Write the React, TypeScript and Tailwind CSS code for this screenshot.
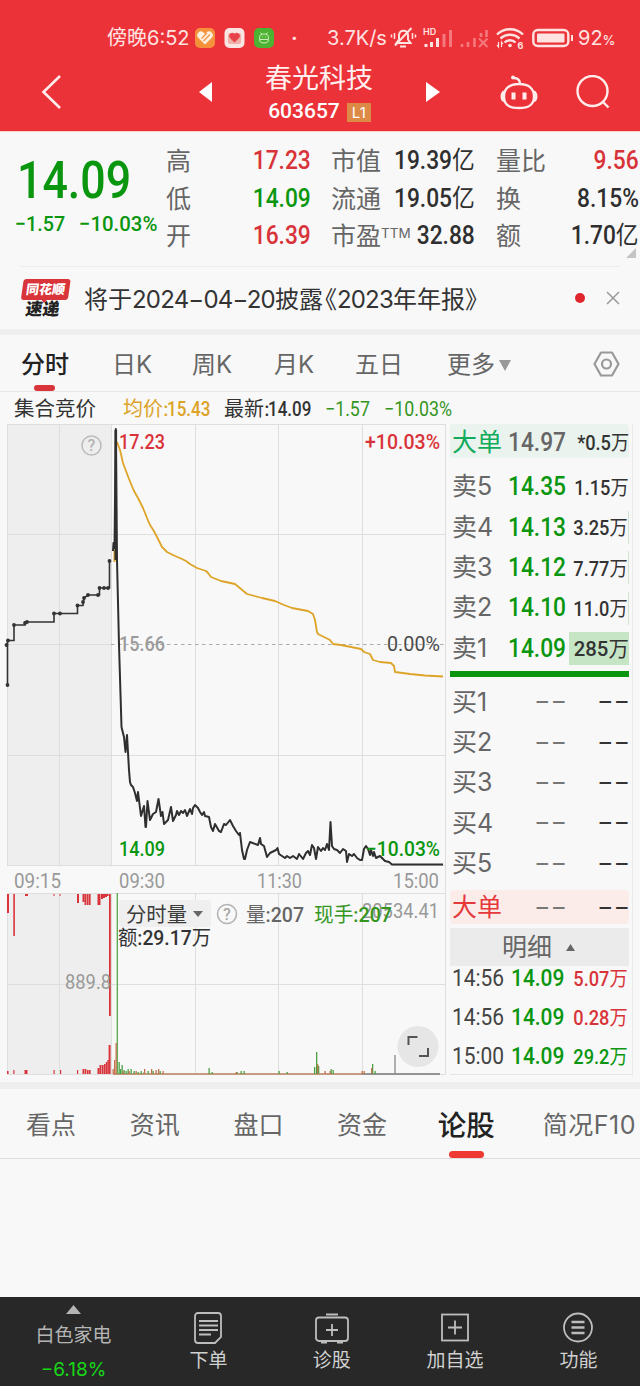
import { ReactNode, SVGProps } from "react";

interface Level {
  label: string;
  price: string;
  volume: string;
}

const sells: Level[] = [
  { label: "卖5", price: "14.35", volume: "1.15万" },
  { label: "卖4", price: "14.13", volume: "3.25万" },
  { label: "卖3", price: "14.12", volume: "7.77万" },
  { label: "卖2", price: "14.10", volume: "11.0万" },
  { label: "卖1", price: "14.09", volume: "285万" },
];

const buys = ["买1", "买2", "买3", "买4", "买5"];

const ticks = [
  { time: "14:56", price: "14.09", volume: "5.07万", up: true },
  { time: "14:56", price: "14.09", volume: "0.28万", up: true },
  { time: "15:00", price: "14.09", volume: "29.2万", up: false },
];

const avgLine =
  "117,442 120,450 123,463 129,479 134,491 138,498 143,508 147,518 150,525 152,528 155,533 162,547 167,552 171,554 175,556 182,559 186,561 190,564 197,568 206,571 208,573 211,577 221,581 235,584 241,589 247,594 262,598 275,601 284,605 292,608 308,611 313,614 315,620 317,632 318,634 322,636 330,640 333,644 341,645 361,649 364,652 370,654 373,660 380,662 391,663 394,666 395,672 410,674 425,675.5 443,676.5";

const auctionLine =
  "7.5,685 7.5,640.5 14,640.5 14,625 25,625 25,622 54,622 54,613.5 77.5,613.5 77.5,605.5 83,605.5 84,598 88,595 99.5,595 99.5,588 109.5,588 109.5,561";

const priceLine =
  "113,551 113.5,543 114.5,548 115.8,429 117,560 119,645 121.5,727 124,737 125.5,752 127,735 129,770 130,782 131,785 133,787 135,793 137,801 138,792 141,816 144,806 145.5,827 146,827 147.5,801 150,820 153,814 156,812 158.5,799 161,816 162.5,812 164,824 168,820 171,807 173,821 176,815 177,811 179,815 181,811 183,813 185,810 187,816 190,809 192,814 193,808 195,805 198,808 200,812 202,815 204,812 205,816 209,817 211,827 213,831 215,824 219,831 221,832 224,824 226,825 230,820 233,826 236,831 239,835 240,833 242,850 244,859 245,859 247,850 250,842 258,845 260,838 261,844 264,846 267,857 270,853 276,850 277.5,848 279,854 285,858 287,856 290,858 293,856 297,859 299,854 303,859 306,853 308,851 310,855 312,845 314,848 316,859 318,847 321,851 323,848 325,850 327,844 329,850 330.5,822 332,846 334,849 337,850 340,853 343,849 346,851 347,862 349,854 352,856 354,854 357,858 360,860 362,860 364,849 366,846 368,849 370,855 371,850 373,856 374,852 376,858 380,856 385,861 389,862 392,864.5 443,864.5";

const auctionDots = [
  [7.5, 685], [6.5, 645], [8, 640.5], [14, 625], [25, 623], [27, 622], [54, 613.5], [60, 613.5],
  [77.5, 605.5], [83, 602], [84, 598], [88, 595], [98, 595], [99.5, 588], [104, 588], [108, 588], [109.5, 561],
];

// [x, width, height] hanging from the top of the volume pane
const topBars = [
  [7, 2, 19], [13.3, 1.6, 42], [25, 3, 2], [53.5, 1, 2], [59.5, 1, 2], [77, 2, 9], [82.5, 2, 8], [84.5, 2, 11],
  [87, 1.6, 11], [89, 1.6, 11], [97.5, 3, 11], [101, 2, 5], [103, 2, 4], [105, 2, 3], [107, 1.6, 2], [109, 1.8, 122],
];

// [x, width, height] standing on the bottom of the auction volume pane
const lowBars = [
  [7, 1.6, 3], [13.3, 1.2, 4], [24.5, 3, 4], [53.5, 1.2, 4], [60, 1.2, 4], [77, 1.2, 4], [82.5, 2, 5], [85, 1.4, 5],
  [87, 1.6, 4], [89, 1.6, 4], [97.5, 2, 6], [99.5, 2, 9], [102, 1.6, 9], [104, 1.6, 10], [105.8, 1.6, 12],
  [107.4, 1.4, 14], [108.6, 2, 29],
];

const greenBars = [
  [119, 12], [120.5, 5], [122, 9], [124, 4], [126, 3], [128, 5], [131, 5], [134, 3], [138, 2], [141, 3], [144, 2],
  [148, 3], [153, 3], [160, 3], [209, 6], [212, 2], [237, 2], [241, 3], [244, 3], [279, 3], [287, 2], [314.5, 7],
  [316.5, 22], [318.5, 8], [331, 5], [333, 4], [372.5, 10], [375, 3],
];

const redBars = [
  [113, 5], [114.5, 14], [116, 31], [123, 3], [129, 3], [136, 3], [144.5, 5], [151.5, 5], [156, 4], [158.5, 5],
  [163, 3], [236, 2], [317.5, 10], [325, 3], [330, 3], [362, 3], [364, 3], [371.5, 6],
];

const Triangle = ({ points, size }: { points: string; size: string }) => (
  <svg className={size} viewBox="0 0 10 10" preserveAspectRatio="none" fill="currentColor">
    <polygon points={points} />
  </svg>
);

// Condensed figures, with the unit (万 / 亿) kept in the regular weight
const Num = ({ value, className = "" }: { value: string; className?: string }) => {
  const unit = value.match(/[万亿]$/)?.[0] ?? "";
  return (
    <span
      className={`inline-block scale-x-[0.91] font-[family-name:Roboto,'Noto_Sans_CJK_SC',sans-serif] font-medium whitespace-nowrap ${className}`}
    >
      {unit ? value.slice(0, -1) : value}
      {unit && <span className="font-normal">{unit}</span>}
    </span>
  );
};

const StatusBar = () => (
  <div className="flex h-[26px] items-center text-[20px] text-[#ffe3e1]">
    <span className="w-[89px] pl-px whitespace-nowrap">傍晚6:52</span>
    <svg className="w-[79px] shrink-0" height="20" viewBox="0 0 79 20">
      <rect width="20" height="20" rx="5" fill="#f6913b" />
      <path d="M10 16.500 3.500 10a3.600 3.600 0 0 1 5-5.500L10 6l1.500-1.500a3.600 3.600 0 0 1 5 5.500z" fill="#fff0df" />
      <path d="m6.500 10.500 5.500-5.500M8.500 13l6.500-6.500" stroke="#f6913b" strokeWidth="1.200" />
      <rect x="29.5" width="20" height="20" rx="5" fill="#fbe5e3" />
      <rect x="33" y="5" width="13" height="11" rx="2" fill="#efb0aa" />
      <path d="m39.500 14.500-4.500-4.500a3 3 0 0 1 4.500-4 3 3 0 0 1 4.500 4z" fill="#e8434a" />
      <rect x="59" width="20" height="20" rx="5" fill="#4db232" />
      <g fill="none" stroke="#cdeebc" strokeWidth="1">
        <path d="M64.500 9.500a4.500 3.500 0 0 1 9 0v2a4.500 3.500 0 0 1-9 0zM65.500 4.500l1.500 2M72.500 4.500l-1.500 2M65 11.500h8" />
        <path d="M67.300 8.500v1M70.700 8.500v1" />
      </g>
    </svg>
    <span className="w-[53px] pl-[17px] leading-none font-bold">·</span>
    <span className="w-[63px] whitespace-nowrap">3.7K/s</span>
    <svg className="shrink-0" width="192" height="24" viewBox="391 25 192 24" fill="none" stroke="currentColor">
      {/* muted bell */}
      <g strokeWidth="2">
        <path d="M397.500 42h14l-2.500-3.500v-4c0-6.500-9-6.500-9 0v4zM401 45.500h6M412.500 27 396 44.500" />
        <path d="M395.500 32v6M392.500 33.500v3M413.500 32v6M416.500 33.500v3" strokeWidth="1.500" />
      </g>
      {/* SIM 1 */}
      <text x="424" y="34" fontSize="9" fontWeight="600" className="fill-current stroke-none">
        HD
      </text>
      <g strokeWidth="3">
        <path d="M427 46v-3M432.500 46v-5M438.500 46v-9" />
        <path d="M445 46v-13M451.500 46v-17" opacity=".4" />
      </g>
      {/* SIM 2 */}
      <g strokeWidth="2.600" opacity=".4">
        <path d="M463 46v-3M469 46v-5M475.500 46v-9M487.500 36v-7M482 36v-4" />
        <path d="m480 37.500 8.500 8.500m0-8.500-8.500 8.500" strokeWidth="2" />
      </g>
      {/* wifi */}
      <g strokeWidth="2.400">
        <path d="M498 33.500c7-7 19-7 26 0M501.500 37.500c5.500-5 13.500-5 19 0M505.500 41.500c3-3 8-3 11 0" />
        <path d="M499.500 41v5l-1.500-2M502.500 46v-5l1.500 2" strokeWidth="1.200" />
        <circle cx="511" cy="44.500" r="1.800" fill="currentColor" stroke="none" />
      </g>
      <text x="518.500" y="47.500" fontSize="9" fontWeight="700" className="fill-current stroke-none">
        6
      </text>
      <rect x="534.300" y="29" width="35" height="16" rx="4.500" strokeWidth="2.400" />
      <rect x="538" y="32.500" width="27.500" height="9" rx="1" fill="currentColor" stroke="none" />
      <path d="M573 34v6" strokeWidth="2" />
    </svg>
    <span className="-ml-[4px] whitespace-nowrap">
      92<span className="text-[13px] font-medium">%</span>
    </span>
  </div>
);

const Header = () => (
  <header className="h-[132px] border-b border-[#fbd0cf] bg-[#ec3239] pt-[25px] text-white">
    <div className="pl-[106px]">
      <StatusBar />
    </div>
    <div className="flex h-[82px] items-center pl-[41px]">
      <svg className="w-[158px] shrink-0" height="36" viewBox="0 0 158 36" fill="none" stroke="#ffeceb" strokeWidth="2.600">
        <path d="M19 2 2.500 18 19 34" />
      </svg>
      <Triangle points="10,0 0,5 10,10" size="h-5 w-[13px]" />
      <div className="flex w-[214px] flex-col items-center pt-[5px]">
        <h1 className="text-[27px] leading-[35px] text-[#fff0ef]">春光科技</h1>
        <div className="flex h-[32px] items-center gap-[7px] pl-px">
          <span className="font-[family-name:Roboto,sans-serif] text-[21px] font-medium">603657</span>
          <span className="flex h-[19px] w-[24px] items-center justify-center bg-[#dc8a46] text-[15px] leading-none">
            L1
          </span>
        </div>
      </div>
      <Triangle points="0,0 10,5 0,10" size="h-5 w-[14px]" />
      <svg className="ml-[60px]" width="38" height="36" viewBox="0 0 38 36" fill="none" stroke="#ffeceb" strokeWidth="2.400">
        <path d="M19 10c10 0 15 5 15 12.500S30 34 19 34 4 30 4 22.500 9 10 19 10zM20 10c0-4-2-6-6-6M4 17.500c-3 2-3 8 0 9.500M34 17.500c3 2 3 8 0 9.500" />
        <circle cx="13" cy="3.500" r="2" fill="#ffeceb" stroke="none" />
        <path d="M13.500 18.500v7M24.500 18.500v7" strokeWidth="4" />
      </svg>
      <svg className="ml-[38px]" width="34" height="34" viewBox="0 0 34 34" fill="none" stroke="#ffeceb" strokeWidth="2.400">
        <circle cx="16.500" cy="16" r="15" />
        <path d="m26.500 26.500 6 6" />
      </svg>
    </div>
  </header>
);

const Stat = ({ label, value, color = "text-[#2f2f2f]" }: { label: ReactNode; value: string; color?: string }) => (
  <div className="flex h-[37.5px] items-center justify-between whitespace-nowrap">
    <span className="text-[25px] text-[#666]">{label}</span>
    <Num value={value} className={`-mt-[2px] origin-right text-[25px] ${color}`} />
  </div>
);

const Quote = () => (
  <section className="relative grid h-[134px] grid-cols-[131px_145px_144px_144px] gap-x-[20px] pt-[11px] pl-[15px]">
    <div className="text-[#0a960f]">
      <Num value="14.09" className="ml-[2px] origin-left text-[52px] leading-[75px] !scale-x-[0.86]" />
      <div className="flex h-[14px] items-center gap-[15px] text-[21px]">
        <Num value="−1.57" className="w-[49px] origin-left !scale-x-[0.94]" />
        <Num value="−10.03%" className="origin-left !scale-x-[0.97]" />
      </div>
    </div>
    <div>
      <Stat label="高" value="17.23" color="text-[#d9333a]" />
      <Stat label="低" value="14.09" color="text-[#0a960f]" />
      <Stat label="开" value="16.39" color="text-[#d9333a]" />
    </div>
    <div>
      <Stat label="市值" value="19.39亿" />
      <Stat label="流通" value="19.05亿" />
      <Stat label={<>市盈<sup className="top-[-0.5em] text-[13.500px]">TTM</sup></>} value="32.88" />
    </div>
    <div className="pl-px">
      <Stat label="量比" value="9.56" color="text-[#d9333a]" />
      <Stat label="换" value="8.15%" />
      <Stat label="额" value="1.70亿" />
    </div>
    <span className="absolute right-[4px] bottom-[8px] flex text-[#c4c4c4]">
      <Triangle points="10,0 10,10 0,10" size="h-2.5 w-2.5" />
    </span>
  </section>
);

const News = () => (
  <section className="mx-5 flex h-[63px] items-center border-t border-[#ececec]">
    <div className="w-[64px] shrink-0 -skew-x-[8deg] pt-px pl-px font-black">
      <div className="relative flex h-[21px] w-[47px] items-center justify-center rounded-[3px] bg-[#d8343a] text-[13px] leading-none text-white">
        同花顺
        <span className="absolute top-[20px] left-[20px] flex text-[#d8343a]">
          <Triangle points="0,0 10,0 5,10" size="h-[4px] w-[7px]" />
        </span>
      </div>
      <div className="w-[46px] text-center text-[17px] leading-[19px] text-[#222]">速递</div>
    </div>
    <p className="w-[491px] shrink-0 pt-[4px] text-[24px] whitespace-nowrap text-[#333]">
      将于<span className="tracking-[-0.8px]">2024−04−20</span>披露
      <span className="-ml-[10px]">《</span>
      <span className="tracking-[-0.8px]">2023</span>
      年年报》
    </p>
    <span className="h-[10px] w-[10px] shrink-0 rounded-full bg-[#e0262c]" />
    <svg className="ml-[21px] shrink-0" width="14" height="14" viewBox="0 0 14 14" stroke="#999" strokeWidth="1.500">
      <path d="m1 1 12 12M13 1 1 13" />
    </svg>
  </section>
);

const PeriodTabs = () => (
  <nav className="flex h-[57px] items-center border-b border-[#e6e6e6] pt-[4px] pl-[21px] text-[24px] text-[#666]">
    <div className="relative flex h-full w-[91px] items-center font-medium text-[#222]">
      分时
      <span className="absolute bottom-0 left-[13px] h-[6px] w-[21px] rounded-full bg-[#d8343a]" />
    </div>
    <span className="w-[80px]">日K</span>
    <span className="w-[82px]">周K</span>
    <span className="w-[81px]">月K</span>
    <span className="w-[92px]">五日</span>
    <span className="flex w-[146px] items-center gap-1">
      更多
      <span className="text-[#999]">
        <Triangle points="0,0 10,0 5,10" size="h-[11px] w-[12px]" />
      </span>
    </span>
    <svg className="-mt-[2px]" width="27" height="26" viewBox="0 0 27 26" fill="none" stroke="#999" strokeWidth="2.200">
      <path d="M8 1.500h11L25.500 13 19 24.500H8L1.500 13z" strokeLinejoin="round" />
      <circle cx="13.500" cy="13" r="4.500" />
    </svg>
  </nav>
);

const Legend = () => (
  <div className="flex h-[32px] items-center pt-[2px] pl-[14px] text-[20px] whitespace-nowrap text-[#333]">
    <span className="w-[109px] text-[20.500px]">集合竞价</span>
    <span className="w-[44px] text-[#dca327]">均价:</span>
    <Num value="15.43" className="w-[57px] origin-left text-[#dca327] !scale-x-[0.85]" />
    <span className="w-[44px]">最新:</span>
    <Num value="14.09" className="w-[57px] origin-left !scale-x-[0.85]" />
    <Num value="−1.57" className="w-[59px] origin-left !scale-x-[0.89] !font-normal text-[#35961f]" />
    <Num value="−10.03%" className="origin-left !scale-x-[0.89] !font-normal text-[#35961f]" />
  </div>
);

// Chart label squeezed to a given width
const Label = (props: SVGProps<SVGTextElement>) => <text lengthAdjust="spacingAndGlyphs" {...props} />;

const Charts = () => (
  <svg
    className="shrink-0 font-[family-name:Roboto,'Noto_Sans_CJK_SC',sans-serif] text-[21px] font-medium"
    width="446"
    height="652"
    viewBox="0 424 446 652"
    fill="none"
  >
    <rect x="7" y="424" width="104" height="441" fill="#eeeeee" />
    <rect x="7" y="893" width="104" height="181" fill="#eeeeee" />
    <g stroke="#dedede" strokeWidth="1">
      <path d="M7 424.500H446M7 534.500H446M7 644.500H111M7 755.500H446M7 865.500H446M7 893.500H446M7 984.500H446M7 1074.500H446" />
      <path d="M7.500 424V865M59.500 424V865M111.500 424V865M195.500 424V865M278.500 424V865M362.500 424V865M445.500 424V1074" />
      <path d="M7.500 893V1074M59.500 893V1074M111.500 893V1074M195.500 893V1074M278.500 893V1074M362.500 893V1074" />
    </g>
    <path d="M111 644.500H446" stroke="#aaa" strokeDasharray="3.500 3.500" />

    <circle cx="91.500" cy="445.500" r="9.500" stroke="#bcbcbc" strokeWidth="1.600" />
    <text x="91.500" y="451" fontSize="16" textAnchor="middle" fill="#b4b4b4">?</text>

    <Label x="119" y="651" textLength="46" fill="#9b9b9b">15.66</Label>
    <Label x="387" y="651" textLength="53" fill="#4b4b4b" fontWeight="400">0.00%</Label>

    <polyline points={avgLine} stroke="#dda428" strokeWidth="1.800" strokeLinejoin="round" />
    <path d="M114.500 550v12" stroke="#dda428" strokeWidth="2" />
    <polyline points={auctionLine} stroke="#333" strokeWidth="1.600" />
    {auctionDots.map(([x, y], i) => (
      <circle key={i} cx={x} cy={y} r="1.900" fill="#333" />
    ))}
    <polyline points={priceLine} stroke="#2f2f2f" strokeWidth="2" strokeLinejoin="round" />
    <path d="M115.800 430V560" stroke="#2f2f2f" strokeWidth="2.600" />

    <Label x="119" y="449" textLength="46" fill="#d9333a">17.23</Label>
    <Label x="365" y="449" textLength="75" fill="#d9333a">+10.03%</Label>
    <Label x="119" y="856" textLength="46" fill="#0a960f">14.09</Label>
    <Label x="366" y="856" textLength="74" fill="#0a960f">−10.03%</Label>

    <g fill="#999" fontWeight="400">
      <Label x="14" y="888" textLength="47">09:15</Label>
      <Label x="119" y="888" textLength="46">09:30</Label>
      <Label x="257" y="888" textLength="45">11:30</Label>
      <Label x="393" y="888" textLength="46">15:00</Label>
    </g>

    <g fill="#d8343a">
      {topBars.map(([x, w, h], i) => (
        <rect key={i} x={x} y="894" width={w} height={h} />
      ))}
      {lowBars.map(([x, w, h], i) => (
        <rect key={i} x={x} y={1074 - h} width={w} height={h} />
      ))}
    </g>
    <path d="M113 1074H362" stroke="#b8805f" strokeWidth="1.400" />
    <path d="M362 1074H440" stroke="#777" strokeWidth="1.400" />
    <path d="M117.300 893V1074" stroke="#55a847" strokeWidth="1.300" />
    {greenBars.map(([x, h], i) => (
      <rect key={i} x={x - 0.5} y={1074 - h} width="1.300" height={h} fill="#4ba244" />
    ))}
    {redBars.map(([x, h], i) => (
      <rect key={i} x={x - 0.5} y={1074 - h} width="1.300" height={h} fill="#c4734f" />
    ))}
    <path d="M395 1055V1074" stroke="#888" strokeWidth="1.300" />

    <Label x="65" y="989" textLength="46" fill="#999" fontWeight="400">889.8</Label>
    <rect x="119" y="900" width="92" height="27" rx="3" fill="#efefef" />
    <Label x="126" y="922" fontSize="20.500" textLength="61" fill="#3b3b3b" fontWeight="400">分时量</Label>
    <polygon points="193,911 203,911 198,917" fill="#666" />
    <circle cx="227" cy="914" r="9.500" stroke="#b4b4b4" strokeWidth="1.600" />
    <text x="227" y="919.500" fontSize="16" textAnchor="middle" fill="#aaa">?</text>
    <Label x="246" y="922" fontSize="20.500" textLength="58" fill="#666">
      <tspan fontWeight="400">量</tspan>:207
    </Label>
    <Label x="362" y="918" textLength="77" fill="#999" fontWeight="400">20534.41</Label>
    <Label x="314" y="922" fontSize="20.500" textLength="78" fill="#35961f">
      <tspan fontWeight="400">现手</tspan>:207
    </Label>
    <Label x="118" y="945" fontSize="20.500" textLength="93" fill="#333">
      <tspan fontWeight="400">额</tspan>:29.17<tspan fontWeight="400">万</tspan>
    </Label>

    <circle cx="418" cy="1046.500" r="20.500" fill="#e6e6e6" />
    <path d="M408.500 1045v-8h9M428 1048v8h-9" stroke="#555" strokeWidth="2" />
  </svg>
);

const Dashes = () => (
  <>
    <span className="-mt-[3px] ml-auto w-[44px] shrink-0 whitespace-nowrap text-[#777]">−−</span>
    <span className="-mt-[3px] ml-[19px] w-[32px] shrink-0 whitespace-nowrap text-[#333]">−−</span>
  </>
);

const OrderBook = () => (
  <aside className="ml-[4px] h-[652px] w-[183px] border-r border-[#ebebeb] text-[25px] text-[#666]">
    <div className="flex h-[34px] w-[179px] items-center rounded-sm bg-[#eaf3ee] pt-[3px] pl-[2px]">
      <span className="w-[56px] text-[#12ab5c]">大单</span>
      <Num value="14.97" className="origin-left" />
      <Num value="*0.5万" className="ml-auto origin-right text-[20px] text-[#333]" />
    </div>
    <div className="pt-[9px]">
      {sells.map(({ label, price, volume }) => (
        <div key={label} className="flex h-[40.300px] w-[179px] items-center pl-[2px]">
          <span className="w-[56px]">{label}</span>
          <Num value={price} className="w-[61px] origin-left text-[#0a960f]" />
          <span
            className={`flex h-[33px] w-[60px] items-center justify-end text-[20px] text-[#333] ${
              label === "卖1" ? "bg-[#c5e5c5]" : label === "卖5" ? "" : "border-r border-[#cfe4d2]"
            }`}
          >
            <Num
              value={volume}
              className={`mt-[2px] origin-right ${label === "卖1" ? "text-[21px] !scale-x-[0.97]" : ""}`}
            />
          </span>
        </div>
      ))}
    </div>
    <div className="mt-[3px] h-[6px] w-[179px] bg-[#0a960f]" />
    <div className="mt-[5px]">
      {buys.map((label) => (
        <div key={label} className="flex h-[40.300px] w-[179px] items-center pl-[2px]">
          <span>{label}</span>
          <Dashes />
        </div>
      ))}
    </div>
    <div className="mt-[6px] flex h-[34px] w-[179px] items-center rounded-sm bg-[#fbecea] pt-[2px] pl-[2px]">
      <span className="text-[#e5393b]">大单</span>
      <Dashes />
    </div>
    <div className="mt-[4px] flex h-[38px] w-[179px] items-center justify-center gap-[14px] bg-[#ebebeb] pt-[2px] pr-[2px]">
      明细
      <Triangle points="0,10 5,0 10,10" size="h-[7px] w-[9px]" />
    </div>
    <div className="flex flex-col gap-[15px] border-b border-[#e6e6e6] pt-px pb-[5px]">
      {ticks.map(({ time, price, volume, up }, i) => (
        <div key={i} className="flex h-6 w-[178px] items-center pl-[2px] text-[23px]">
          <Num value={time} className="w-[63px] origin-left !font-normal text-[#444]" />
          <Num value={price} className="w-[57px] origin-left text-[#0a960f]" />
          <Num
            value={volume}
            className={`ml-auto origin-right text-[20px] ${up ? "text-[#d9333a]" : "text-[#0a960f]"}`}
          />
        </div>
      ))}
    </div>
  </aside>
);

const SectionTabs = () => (
  <nav className="flex h-[70px] items-center overflow-hidden border-b border-[#dedede] pt-[5px] pl-[26px] text-[25px] whitespace-nowrap text-[#666]">
    {["看点", "资讯", "盘口", "资金"].map((tab) => (
      <span key={tab} className="w-[103.700px] shrink-0">
        {tab}
      </span>
    ))}
    <div className="relative -ml-[3px] flex h-full w-[105px] shrink-0 items-center text-[28.500px] font-medium text-[#222]">
      论股
      <span className="absolute bottom-0 left-[11px] h-[7px] w-[35px] rounded-full bg-[#ee3a30]" />
    </div>
    <span className="tracking-[0.5px]">简况F10</span>
  </nav>
);

const FooterItem = ({ label, children }: { label: string; children: ReactNode }) => (
  <div className="flex w-[123.300px] flex-col items-center pt-[14px]">
    <svg width="36" height="34" viewBox="0 0 36 34" fill="none" stroke="#bdbdbd" strokeWidth="1.800">
      {children}
    </svg>
    <span className="pt-px text-[19px] leading-[30px]">{label}</span>
  </div>
);

const Footer = () => (
  <footer className="mt-auto flex h-[89px] bg-[#282828] text-[#d0d0d0]">
    <div className="flex w-[147px] flex-col items-center pt-[8px] text-[#b4b4b4]">
      <Triangle points="0,10 5,0 10,10" size="h-[9px] w-[15px]" />
      <span className="mt-[8px] text-[19px] leading-[28px]">白色家电</span>
      <span className="mt-[6px] text-[19px] leading-[28px] text-[#17d817]">−6.18%</span>
    </div>
    <FooterItem label="下单">
      <path d="M7 2h20a3 3 0 0 1 3 3v21l-6 6H7a3 3 0 0 1-3-3V5a3 3 0 0 1 3-3zM8 10h19M8 14.500h19M8 19h19M8 23.500h12" />
    </FooterItem>
    <FooterItem label="诊股">
      <rect x="2" y="6.500" width="32" height="23.500" rx="3" />
      <path d="M12 3.500h12M7 31.500h6M23 31.500h6M18 13v12M12 19h12" />
    </FooterItem>
    <FooterItem label="加自选">
      <rect x="5" y="3.500" width="26" height="26" />
      <path d="M18 9.500v14M11 16.500h14" />
    </FooterItem>
    <FooterItem label="功能">
      <circle cx="18" cy="16.500" r="14" />
      <path d="M11.500 11h13M11.500 16.500h13M11.500 22h13" strokeWidth="2.600" />
    </FooterItem>
  </footer>
);

export default function App() {
  return (
    <div className="flex h-[1386px] w-[640px] flex-col overflow-hidden bg-[#f8f8f8] font-[family-name:Inter,'Noto_Sans_CJK_SC',sans-serif]">
      <Header />
      <Quote />
      <News />
      <div className="h-[6px] bg-[#eeeeee]" />
      <PeriodTabs />
      <Legend />
      <main className="flex h-[658px]">
        <Charts />
        <OrderBook />
      </main>
      <div className="h-[7px] bg-[#eeeeee]" />
      <SectionTabs />
      <Footer />
    </div>
  );
}
